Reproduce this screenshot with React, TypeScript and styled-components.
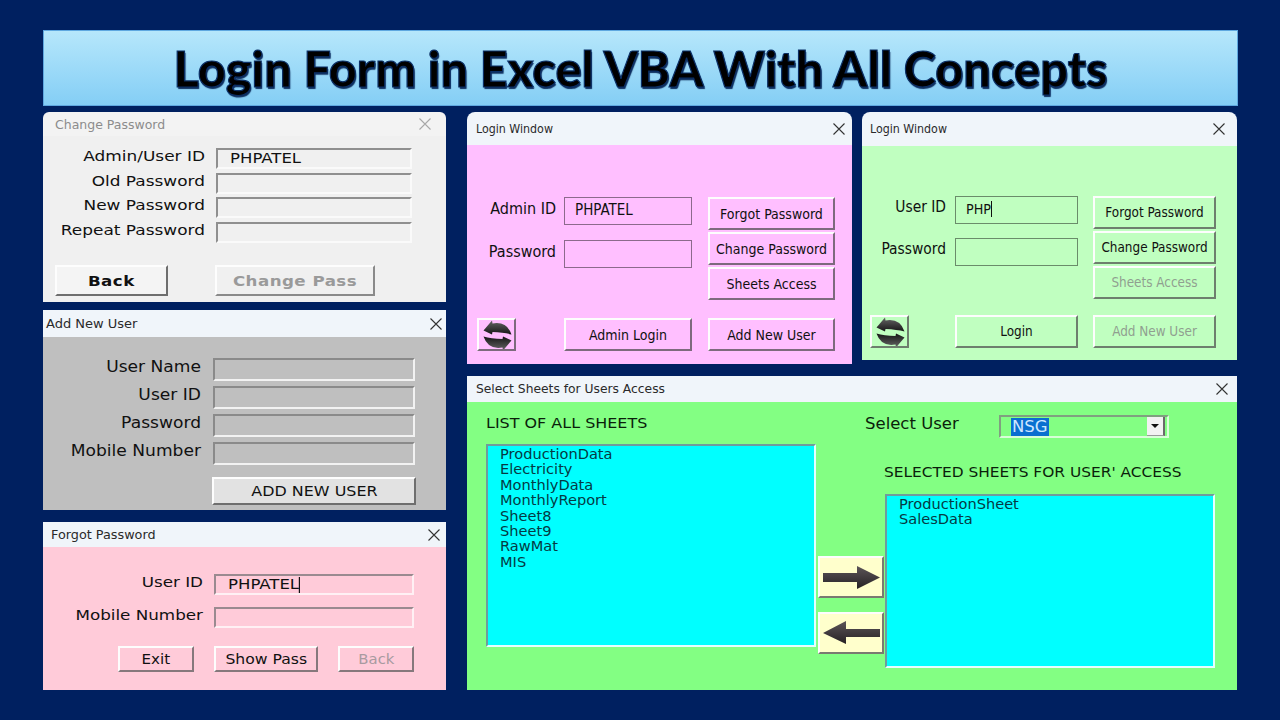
import React from 'react';
import styled, { createGlobalStyle } from 'styled-components';

const GlobalStyle = createGlobalStyle`
  html, body { margin: 0; padding: 0; background: #002060; }
  * { box-sizing: border-box; }
`;

const VERDANA = `"DejaVu Sans", Verdana, sans-serif`;
const TAHOMA = `"DejaVu Sans Condensed", "Noto Sans", sans-serif`;

const Page = styled.div`
  width: 1280px;
  height: 720px;
  padding: 30px 42px 0 43px;
  background: #002060;
  overflow: hidden;
`;

const Banner = styled.h1`
  height: 76px;
  margin: 0 0 6px;
  display: flex;
  align-items: center;
  justify-content: center;
  border: 1px solid #5fa8e0;
  background: linear-gradient(#b6e7fb, #84cef5);
  font: 900 48.7px/1 Lato, "Open Sans", sans-serif;
  color: #000;
  -webkit-text-stroke: 1.2px #0b2f66;
  text-shadow: 1px 2px 1px #10305f;
`;

const Desk = styled.div`
  display: flex;
  gap: 21px;
`;

const LeftColumn = styled.div`
  width: 403px;
  display: flex;
  flex-direction: column;
  align-items: stretch;
`;

const RightColumn = styled.div`
  width: 770px;
  display: flex;
  flex-direction: column;
  gap: 12px;
`;

const TopWindows = styled.div`
  display: flex;
  align-items: flex-start;
  gap: 10px;
  height: 252px;
`;

// the form text in the reference is stretched sideways, as a resized screenshot is
const Wide = styled.span<{ $x: number; $origin?: string }>`
  display: inline-block;
  white-space: nowrap;
  transform: scaleX(${p => p.$x});
  transform-origin: ${p => p.$origin || 'center'};
`;

const Window = styled.section<{ $w?: number; $h: number; $mb?: number; $radius?: number }>`
  width: ${p => (p.$w ? `${p.$w}px` : '100%')};
  height: ${p => p.$h}px;
  margin-bottom: ${p => p.$mb || 0}px;
  flex: none;
  display: flex;
  flex-direction: column;
  border-radius: ${p => p.$radius || 0}px ${p => p.$radius || 0}px 0 0;
  overflow: hidden;
`;

const TitleBar = styled.header<{ $h: number; $pl: number; $pr: number; $font: string; $size: number; $muted?: boolean }>`
  height: ${p => p.$h}px;
  flex: none;
  padding: 0 ${p => p.$pr}px 0 ${p => p.$pl}px;
  display: flex;
  align-items: center;
  justify-content: space-between;
  background: ${p => (p.$muted ? '#f3f3f3' : '#f0f5fa')};
  color: ${p => (p.$muted ? '#8c8c8c' : '#2a2a2a')};
  font-family: ${p => p.$font};
  font-size: ${p => p.$size}px;
`;

const Body = styled.div<{ $bg: string; $pad: string }>`
  flex: 1;
  min-height: 0;
  padding: ${p => p.$pad};
  background: ${p => p.$bg};
  display: flex;
  flex-direction: column;
  justify-content: space-between;
`;

const FormGrid = styled.div<{ $label: number; $field: number; $gapX: number; $gapY: number }>`
  display: grid;
  grid-template-columns: ${p => p.$label}px ${p => p.$field}px;
  column-gap: ${p => p.$gapX}px;
  row-gap: ${p => p.$gapY}px;
`;

const Label = styled.label<{ $size: number; $x: number; $offset?: number }>`
  display: block;
  align-self: center;
  text-align: right;
  white-space: nowrap;
  font-family: ${VERDANA};
  font-size: ${p => p.$size}px;
  line-height: 1;
  color: #111;
  margin-top: ${p => p.$offset || 0}px;
  transform: scaleX(${p => p.$x});
  transform-origin: right center;
`;

const Sunken = styled.div<{ $h: number; $dark: string; $light: string; $bg: string; $pb?: number }>`
  height: ${p => p.$h}px;
  padding: 0 0 ${p => p.$pb || 0}px 12px;
  display: flex;
  align-items: center;
  background: ${p => p.$bg};
  border-style: solid;
  border-width: 2px;
  border-color: ${p => p.$dark} ${p => p.$light} ${p => p.$light} ${p => p.$dark};
  font-family: ${VERDANA};
  font-size: 14px;
  color: #111;
`;

const Caret = styled.span`
  display: inline-block;
  width: 1px;
  height: 16px;
  vertical-align: middle;
  background: #111;
`;

const Raised = styled.button<{ $w?: number; $h: number; $bg: string; $shade: string; $size: number; $font?: string; $bold?: boolean; $off?: boolean; $fade?: string }>`
  width: ${p => (p.$w ? `${p.$w}px` : '100%')};
  height: ${p => p.$h}px;
  flex: none;
  padding: 0;
  display: flex;
  align-items: center;
  justify-content: center;
  background: ${p => p.$bg};
  border-style: solid;
  border-width: 2px;
  border-color: #fdfdfd ${p => p.$shade} ${p => p.$shade} #fdfdfd;
  font-family: ${p => p.$font || VERDANA};
  font-size: ${p => p.$size}px;
  font-weight: ${p => (p.$bold ? 700 : 400)};
  letter-spacing: ${p => (p.$bold ? '0.4px' : '0')};
  color: ${p => (p.$off ? p.$fade || '#9a9a9a' : '#111')};
`;

const ButtonRow = styled.div<{ $pl: number; $gap: number }>`
  display: flex;
  padding-left: ${p => p.$pl}px;
  gap: ${p => p.$gap}px;
`;

/* login windows */
const LoginTop = styled.div`
  display: flex;
  align-items: flex-start;
`;

const LoginFields = styled.div<{ $label: number; $gapX: number; $field: number; $gapY: number }>`
  display: grid;
  grid-template-columns: ${p => p.$label}px ${p => p.$field}px;
  column-gap: ${p => p.$gapX}px;
  row-gap: ${p => p.$gapY}px;
`;

const LoginLabel = styled.label<{ $size: number }>`
  align-self: center;
  text-align: right;
  white-space: nowrap;
  font-family: ${TAHOMA};
  font-size: ${p => p.$size}px;
  line-height: 1;
  color: #111;
  margin-top: -5px;
`;

const LoginField = styled.div<{ $bg: string; $line: string; $size: number }>`
  height: 28px;
  padding-left: 10px;
  padding-bottom: 2px;
  display: flex;
  align-items: center;
  background: ${p => p.$bg};
  border: 1px solid ${p => p.$line};
  font-family: ${TAHOMA};
  font-size: ${p => p.$size}px;
  color: #111;
`;

const ButtonStack = styled.div<{ $w: number; $ml: number }>`
  width: ${p => p.$w}px;
  margin-left: ${p => p.$ml}px;
  display: flex;
  flex-direction: column;
  gap: 2px;
`;

const LoginBottom = styled.div`
  display: flex;
`;

/* sheets window */
const SheetsBody = styled.div`
  flex: 1;
  display: flex;
  padding: 0 22px 0 19px;
  background: #83ff83;
`;

const SheetColumn = styled.div`
  width: 330px;
  padding-top: 12px;
  flex: none;
`;

const Heading = styled.div<{ $pl?: number }>`
  height: 18px;
  padding-left: ${p => p.$pl || 0}px;
  font-family: ${VERDANA};
  font-size: 14px;
  line-height: 18px;
  white-space: nowrap;
  color: #0b1f0b;
`;

const SheetList = styled.ul<{ $h: number; $w: number; $mt?: number }>`
  width: ${p => p.$w}px;
  height: ${p => p.$h}px;
  margin: ${p => p.$mt || 0}px 0 0;
  padding: 0 0 0 12px;
  list-style: none;
  background: #00ffff;
  border-style: solid;
  border-width: 2px;
  border-color: #6f9c9c #e4ffff #e4ffff #6f9c9c;
  font-family: ${VERDANA};
  font-size: 14.6px;
  line-height: 15.4px;
  color: #053a44;
`;

const AccessPanel = styled.div`
  flex: 1;
  margin-left: 2px;
  padding-top: 13px;
`;

const SelectRow = styled.div`
  display: flex;
  align-items: center;
  padding-left: 47px;
  gap: 39px;
  margin-bottom: 25px;
`;

const SelectLabel = styled.span`
  width: 95px;
  margin-top: -5px;
  font-family: ${VERDANA};
  font-size: 15px;
  white-space: nowrap;
  color: #0b1f0b;
`;

const Combo = styled.div`
  width: 170px;
  height: 23px;
  padding: 1px 2px 1px 10px;
  display: flex;
  align-items: center;
  justify-content: space-between;
  border-style: solid;
  border-width: 2px;
  border-color: #80a080 #d8ffd8 #d8ffd8 #80a080;
  background: #83ff83;
`;

const ComboValue = styled.span`
  padding: 0 1px;
  background: #0a6fd0;
  color: #cfe6ff;
  font-family: ${VERDANA};
  font-size: 16.5px;
  line-height: 18px;
`;

const ComboDrop = styled.span`
  width: 18px;
  height: 19px;
  display: flex;
  align-items: center;
  justify-content: center;
  background: #f2f2f2;
  border-right: 2px solid #6a6a6a;
  border-bottom: 1px solid #9a9a9a;
  &::after {
    content: '';
    border-style: solid;
    border-width: 4px 4px 0;
    border-color: #111 transparent transparent;
  }
`;

const TransferRow = styled.div`
  display: flex;
  align-items: flex-start;
  gap: 1px;
  margin-top: 13px;
`;

const ArrowColumn = styled.div`
  width: 66px;
  padding-top: 62px;
  display: flex;
  flex-direction: column;
  gap: 14px;
`;

const Close = ({ color = '#333', size = 12 }: { color?: string; size?: number }) => (
  <svg width={size} height={size} viewBox="0 0 12 12">
    <path d="M0.5 0.5 L11.5 11.5 M11.5 0.5 L0.5 11.5" stroke={color} strokeWidth="1.1" fill="none" />
  </svg>
);

const SWOOSH = 'M6.5 12.5 L15 2.5 L15.5 5.5 Q30 3 34.5 16.5 Q27 14.5 15.5 14 L15 16.5 Z';

const RefreshIcon = ({ id }: { id: string }) => (
  <svg width="35" height="29" viewBox="2 2 35 29">
    <defs>
      <linearGradient id={id} x1="0" y1="0" x2="0" y2="1">
        <stop offset="0" stopColor="#666" />
        <stop offset="1" stopColor="#161616" />
      </linearGradient>
    </defs>
    <path d={SWOOSH} fill={`url(#${id})`} />
    <path d={SWOOSH} fill={`url(#${id})`} transform="rotate(180 20.5 17.5)" />
  </svg>
);

const ArrowIcon = ({ dir }: { dir: 'left' | 'right' }) => (
  <svg width="62" height="42" viewBox="0 0 62 42">
    <defs>
      <linearGradient id={`arrow-${dir}`} x1="0" y1="0" x2="0" y2="1">
        <stop offset="0" stopColor="#5c5558" />
        <stop offset="1" stopColor="#262224" />
      </linearGradient>
    </defs>
    {dir === 'right' ? (
      <path d="M3 17 H37 V10 L60 21.5 L37 33 V26 H3 Z" fill="url(#arrow-right)" />
    ) : (
      <path d="M3 21 L26 9 V17 H60 V25 H26 V32 Z" fill="url(#arrow-left)" />
    )}
  </svg>
);

interface LoginProps {
  bg: string;
  line: string;
  shade: string;
  fade: string;
  width: number;
  height: number;
  titleH: number;
  pad: string;
  labelW: number;
  labelGap: number;
  fieldW: number;
  rowGap: number;
  stackW: number;
  stackGap: number;
  refreshGap: number;
  labelSize: number;
  fieldSize: number;
  buttonSize: number;
  idLabel: string;
  idValue: string;
  caret?: boolean;
  loginText: string;
  restricted?: boolean;
  iconId: string;
  titlePad: [number, number];
}

const LoginWindow = (p: LoginProps) => {
  const btn = { $bg: p.bg, $shade: p.shade, $size: p.buttonSize, $font: TAHOMA, $fade: p.fade };
  return (
    <Window $w={p.width} $h={p.height} $radius={8}>
      <TitleBar $h={p.titleH} $pl={p.titlePad[0]} $pr={p.titlePad[1]} $font={TAHOMA} $size={12.3}>
        Login Window
        <Close />
      </TitleBar>
      <Body $bg={p.bg} $pad={p.pad}>
        <LoginTop>
          <LoginFields $label={p.labelW} $gapX={p.labelGap} $field={p.fieldW} $gapY={p.rowGap}>
            <LoginLabel $size={p.labelSize}>{p.idLabel}</LoginLabel>
            <LoginField $bg={p.bg} $line={p.line} $size={p.fieldSize}>
              {p.idValue}
              {p.caret && <Caret />}
            </LoginField>
            <LoginLabel $size={p.labelSize}>Password</LoginLabel>
            <LoginField $bg={p.bg} $line={p.line} $size={p.fieldSize} />
          </LoginFields>
          <ButtonStack $w={p.stackW} $ml={p.stackGap}>
            <Raised $h={33} {...btn}>Forgot Password</Raised>
            <Raised $h={33} {...btn}>Change Password</Raised>
            <Raised $h={33} {...btn} $off={p.restricted}>Sheets Access</Raised>
          </ButtonStack>
        </LoginTop>
        <LoginBottom>
          <Raised $w={39} $h={33} {...btn} aria-label="Refresh">
            <RefreshIcon id={p.iconId} />
          </Raised>
          <Raised $w={p.fieldW} $h={33} {...btn} style={{ marginLeft: p.refreshGap }}>{p.loginText}</Raised>
          <Raised $w={p.stackW} $h={33} {...btn} $off={p.restricted} style={{ marginLeft: p.stackGap }}>Add New User</Raised>
        </LoginBottom>
      </Body>
    </Window>
  );
};

const App: React.FC = () => {
  const allSheets = ['ProductionData', 'Electricity', 'MonthlyData', 'MonthlyReport', 'Sheet8', 'Sheet9', 'RawMat', 'MIS'];
  const grayField = { $dark: '#8f8f8f', $light: '#fafafa', $bg: '#f0f0f0', $h: 21 };
  const silverField = { $dark: '#8a8a8a', $light: '#f2f2f2', $bg: '#bfbfbf', $h: 23 };
  const pinkField = { $dark: '#9a8a90', $light: '#fff0f4', $bg: '#ffcbd9', $h: 21 };
  const pinkBtn = { $bg: '#ffcbd9', $shade: '#86787c', $size: 13.5, $h: 26 };
  const grayLabel = { $size: 14, $x: 1.21, $offset: -5 };
  const silverLabel = { $size: 15, $x: 1.14, $offset: -5 };
  const pinkLabel = { $size: 14.5, $x: 1.155, $offset: -5 };

  return (
    <Page>
      <GlobalStyle />
      <Banner>Login Form in Excel VBA With All Concepts</Banner>
      <Desk>
        <LeftColumn>
          <Window $h={190} $mb={8} $radius={6}>
            <TitleBar $h={24} $pl={12} $pr={15} $font={VERDANA} $size={12.5} $muted>
              Change Password
              <Close color="#a8a8a8" />
            </TitleBar>
            <Body $bg="#f0f0f0" $pad="12px 0 6px 12px">
              <FormGrid $label={150} $field={196} $gapX={11} $gapY={3.7}>
                <Label {...grayLabel}>Admin/User ID</Label>
                <Sunken {...grayField} $pb={2}><Wide $x={1.18} $origin="left">PHPATEL</Wide></Sunken>
                <Label {...grayLabel}>Old Password</Label>
                <Sunken {...grayField} />
                <Label {...grayLabel}>New Password</Label>
                <Sunken {...grayField} />
                <Label {...grayLabel}>Repeat Password</Label>
                <Sunken {...grayField} />
              </FormGrid>
              <ButtonRow $pl={0} $gap={47}>
                <Raised $w={113} $h={31} $bg="#f4f4f4" $shade="#6e6e6e" $size={14.5} $bold><Wide $x={1.15}>Back</Wide></Raised>
                <Raised $w={160} $h={31} $bg="#f0f0f0" $shade="#8a8a8a" $size={14.5} $bold $off><Wide $x={1.15}>Change Pass</Wide></Raised>
              </ButtonRow>
            </Body>
          </Window>

          <Window $h={200} $mb={12}>
            <TitleBar $h={27} $pl={3} $pr={4} $font={VERDANA} $size={13}>
              Add New User
              <Close />
            </TitleBar>
            <Body $bg="#bfbfbf" $pad="21px 0 5px 10px">
              <FormGrid $label={148} $field={202} $gapX={12} $gapY={5}>
                <Label {...silverLabel}>User Name</Label>
                <Sunken {...silverField} />
                <Label {...silverLabel}>User ID</Label>
                <Sunken {...silverField} />
                <Label {...silverLabel}>Password</Label>
                <Sunken {...silverField} />
                <Label {...silverLabel}>Mobile Number</Label>
                <Sunken {...silverField} />
              </FormGrid>
              <ButtonRow $pl={159} $gap={0}>
                <Raised $w={204} $h={28} $bg="#e2e2e2" $shade="#6e6e6e" $size={13.5}><Wide $x={1.18}>ADD NEW USER</Wide></Raised>
              </ButtonRow>
            </Body>
          </Window>

          <Window $h={168}>
            <TitleBar $h={25} $pl={8} $pr={6} $font={VERDANA} $size={12.8}>
              Forgot Password
              <Close />
            </TitleBar>
            <Body $bg="#ffcbd9" $pad="27px 0 18px 10px">
              <FormGrid $label={150} $field={200} $gapX={11} $gapY={12}>
                <Label {...pinkLabel}>User ID</Label>
                <Sunken {...pinkField}>
                  <Wide $x={1.18} $origin="left">PHPATEL<Caret /></Wide>
                </Sunken>
                <Label {...pinkLabel}>Mobile Number</Label>
                <Sunken {...pinkField} />
              </FormGrid>
              <ButtonRow $pl={65} $gap={20}>
                <Raised $w={76} {...pinkBtn}><Wide $x={1.12}>Exit</Wide></Raised>
                <Raised $w={104} {...pinkBtn}><Wide $x={1.157}>Show Pass</Wide></Raised>
                <Raised $w={76} {...pinkBtn} $off $fade="#a89aa0"><Wide $x={1.1}>Back</Wide></Raised>
              </ButtonRow>
            </Body>
          </Window>
        </LeftColumn>

        <RightColumn>
          <TopWindows>
            <LoginWindow
              bg="#ffbfff" line="#8c6a8c" shade="#7d6a7d" fade="#a08aa0"
              width={385} height={252} titleH={33} pad="52px 17px 13px 10px" titlePad={[9, 7]}
              labelW={79} labelGap={8} fieldW={128} rowGap={15} stackW={127} stackGap={16} refreshGap={48}
              labelSize={16} fieldSize={15} buttonSize={14}
              idLabel="Admin ID" idValue="PHPATEL" loginText="Admin Login" iconId="refresh-admin"
            />
            <LoginWindow
              bg="#c0ffc0" line="#6a8c6a" shade="#6e7f6e" fade="#909f90"
              width={375} height={248} titleH={34} pad="50px 21px 12px 8px" titlePad={[8, 12]}
              labelW={76} labelGap={9} fieldW={123} rowGap={14} stackW={123} stackGap={15} refreshGap={46}
              labelSize={15.4} fieldSize={14.2} buttonSize={13.4}
              idLabel="User ID" idValue="PHP" caret loginText="Login" iconId="refresh-user" restricted
            />
          </TopWindows>

          <Window $h={314}>
            <TitleBar $h={26} $pl={9} $pr={9} $font={VERDANA} $size={12.3}>
              Select Sheets for Users Access
              <Close />
            </TitleBar>
            <SheetsBody>
              <SheetColumn>
                <Heading><Wide $x={1.14} $origin="left">LIST OF ALL SHEETS</Wide></Heading>
                <SheetList $w={330} $h={203} $mt={12}>
                  {allSheets.map(name => <li key={name}>{name}</li>)}
                </SheetList>
              </SheetColumn>
              <AccessPanel>
                <SelectRow>
                  <SelectLabel><Wide $x={1.1} $origin="left">Select User</Wide></SelectLabel>
                  <Combo>
                    <ComboValue>NSG</ComboValue>
                    <ComboDrop />
                  </Combo>
                </SelectRow>
                <Heading $pl={66}><Wide $x={1.1} $origin="left">SELECTED SHEETS FOR USER' ACCESS</Wide></Heading>
                <TransferRow>
                  <ArrowColumn>
                    <Raised $h={42} $bg="#ffffcc" $shade="#7a7a70" $size={12} aria-label="Add sheet">
                      <ArrowIcon dir="right" />
                    </Raised>
                    <Raised $h={42} $bg="#ffffcc" $shade="#7a7a70" $size={12} aria-label="Remove sheet">
                      <ArrowIcon dir="left" />
                    </Raised>
                  </ArrowColumn>
                  <SheetList $w={330} $h={174}>
                    <li>ProductionSheet</li>
                    <li>SalesData</li>
                  </SheetList>
                </TransferRow>
              </AccessPanel>
            </SheetsBody>
          </Window>
        </RightColumn>
      </Desk>
    </Page>
  );
};

export default App;
